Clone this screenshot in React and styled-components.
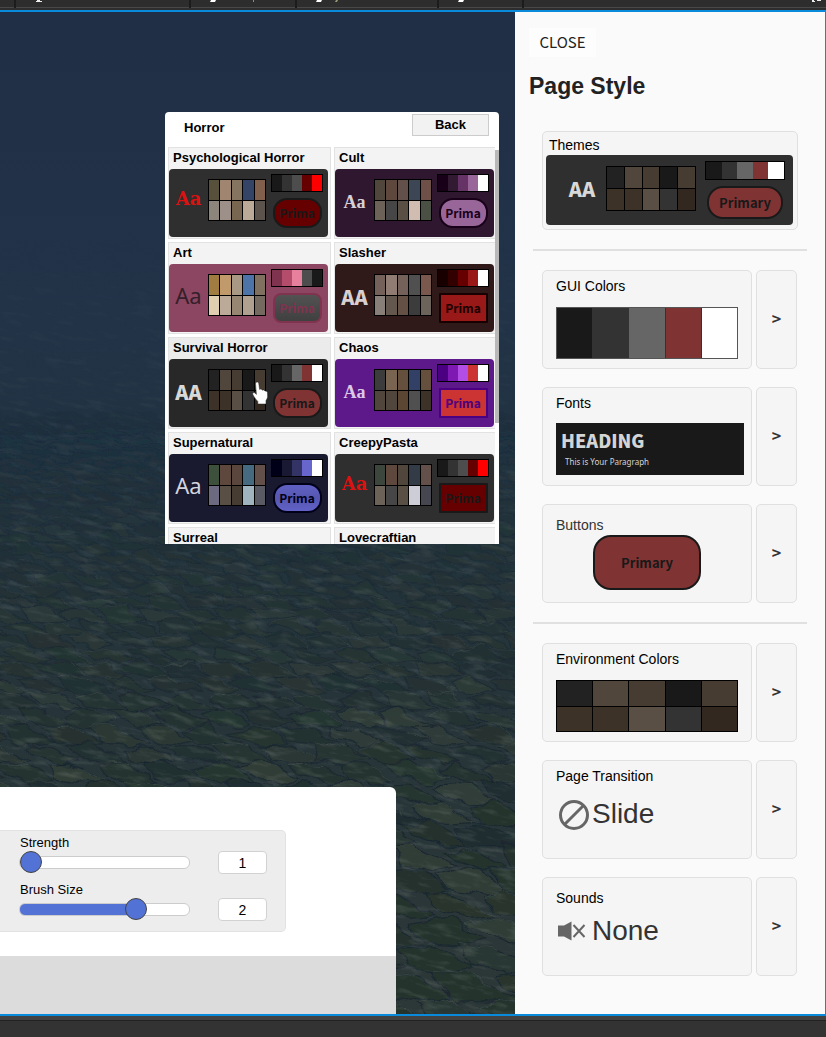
import { useState } from "react";
import styled, { createGlobalStyle } from "styled-components";

const survivalGui = ["#191919", "#333333", "#666666", "#803333", "#ffffff"];
const survivalEnv = [
  "#222222", "#50463c", "#463c32", "#191919", "#463c32",
  "#3c3228", "#3c3228", "#5a4f45", "#333333", "#32281f",
];

const themes = [
  {
    name: "Psychological Horror", bg: "#2f2f2f", font: "typewriter", ink: "#dd1111",
    gui: ["#191919", "#333333", "#4d4d4d", "#660000", "#ff0000"],
    env: ["#57503a", "#a08570", "#85745f", "#334466", "#80604c", "#8c857c", "#9c9088", "#786650", "#bcaa98", "#5c544c"],
    button: "#660000", edge: "#191919", radius: 14,
  },
  {
    name: "Cult", bg: "#2f182f", font: "gothic", ink: "#d8d0d8",
    gui: ["#190019", "#331a33", "#663366", "#996699", "#ffffff"],
    env: ["#50463c", "#5e473c", "#64504a", "#3c4654", "#6e5048", "#6c6258", "#464646", "#5a4f45", "#d0bcb0", "#4a5044"],
    button: "#996699", edge: "#190019", radius: 14,
  },
  {
    name: "Art", bg: "#8d4661", font: "plain", ink: "#33202a",
    gui: ["#80334f", "#b34d6b", "#e6809c", "#4d4d4d", "#191919"],
    env: ["#a07c40", "#c09a6a", "#a89884", "#4d74a8", "#807060", "#e0ceb0", "#bcaa98", "#968672", "#b0a090", "#746a60"],
    button: "linear-gradient(#525252, #404040)", edge: "#80334f", radius: 8,
  },
  {
    name: "Slasher", bg: "#2f1919", font: "creepy", ink: "#d8d0d0",
    gui: ["#190000", "#330000", "#660000", "#991919", "#ffffff"],
    env: ["#74625a", "#907c72", "#74625a", "#505050", "#7a584e", "#888078", "#64584e", "#645044", "#3c3c3c", "#6c645a"],
    button: "#991919", edge: "#190000", radius: 1,
  },
  {
    name: "Survival Horror", bg: "#282828", font: "creepy", ink: "#d8d8d8", hovered: true,
    gui: survivalGui, env: survivalEnv,
    button: "#803333", edge: "#191919", radius: 14,
  },
  {
    name: "Chaos", bg: "#5d1889", font: "gothic", ink: "#dcc8e8",
    gui: ["#4b0082", "#7f19b3", "#b24de6", "#cc3333", "#ffffff"],
    env: ["#3c3c3c", "#786450", "#64503c", "#334066", "#64503c", "#50463c", "#50463c", "#5a4632", "#505050", "#3c3228"],
    button: "#cc3333", edge: "#4b0082", radius: 1,
  },
  {
    name: "Supernatural", bg: "#19192f", font: "plain", ink: "#d4d4dc",
    gui: ["#000019", "#191933", "#333366", "#6666cc", "#ffffff"],
    env: ["#3c503c", "#5e473c", "#5a463c", "#466a80", "#64504a", "#6c6a80", "#5a4f45", "#463c32", "#a0b4c0", "#5a5a64"],
    button: "linear-gradient(#6060c4, #5656b0 50%, #6262c8)", edge: "#000019", radius: 14,
  },
  {
    name: "CreepyPasta", bg: "#2f2f2f", font: "typewriter", ink: "#dd1111",
    gui: ["#191919", "#333333", "#4d4d4d", "#660000", "#ff0000"],
    env: ["#3c463c", "#5e473c", "#50463c", "#333c46", "#64504a", "#6c6258", "#464646", "#5a4f45", "#cccdd6", "#464650"],
    button: "#660000", edge: "#191919", radius: 1,
  },
  { name: "Surreal" },
  { name: "Lovecraftian" },
];

// cobblestones, small and flat near the horizon, bigger towards the viewer
function makeStones() {
  let seed = 11;
  const rnd = () => {
    seed = (seed * 16807) % 2147483647;
    return seed / 2147483647;
  };
  const fills = ["#24332f", "#27362f", "#212f30", "#2b3833", "#26332e", "#323e38", "#22302f"];
  const stones = [];
  let y = 400;
  let row = 0;
  while (y < 1020) {
    const t = (y - 400) / 620;
    const h = 4 + t * 28;
    const w = 24 + t * 44;
    const jit = () => (rnd() - 0.5) * h * 0.5;
    for (let x = -80 + (row % 2) * w * 0.5 + rnd() * 12; x < 580; x += w) {
      const cw = w * (0.8 + rnd() * 0.15);
      const pts = [
        [x + jit(), y + h * 0.1 + jit()],
        [x + cw * 0.55, y + jit() * 0.5],
        [x + cw * 0.85, y + h * 0.2 + jit()],
        [x + cw + h * 0.9, y + h * 0.85 + jit() * 0.5],
        [x + cw * 0.6 + h * 0.7, y + h],
        [x + h * 0.6, y + h * 0.75 + jit()],
      ].map((p) => p.map((n) => n.toFixed(1)).join(","));
      const kind = rnd();
      stones.push({
        key: stones.length,
        points: pts.join(" "),
        edge: (kind > 0.8 ? pts.slice(2, 4) : pts.slice(0, 3)).join(" "),
        fill: fills[Math.floor(rnd() * fills.length)],
        light: kind > 0.55,
        opacity: Math.min(0.9, 0.04 + t * 1.4),
      });
    }
    y += h * 0.98;
    row += 1;
  }
  return stones;
}

const stones = makeStones();

function Ground() {
  return (
    <GroundSvg viewBox="0 0 515 1002" preserveAspectRatio="xMidYMax slice" aria-hidden="true">
      <defs>
        <linearGradient id="sea" x1="0" y1="0" x2="0" y2="1">
          <stop offset="0" stopColor="#202e46" />
          <stop offset="0.3" stopColor="#223348" />
          <stop offset="0.45" stopColor="#203240" />
          <stop offset="0.62" stopColor="#25343a" />
          <stop offset="1" stopColor="#2c3737" />
        </linearGradient>
        <linearGradient id="fade" x1="0" y1="0" x2="0" y2="1">
          <stop offset="0.22" stopColor="#000" />
          <stop offset="0.7" stopColor="#fff" />
        </linearGradient>
        <mask id="depth">
          <rect width="515" height="1002" fill="url(#fade)" />
        </mask>
        <filter id="rough" x="0" y="0" width="1" height="1">
          <feTurbulence type="fractalNoise" baseFrequency="0.04 0.06" numOctaves="2" seed="4" result="n" />
          <feDisplacementMap in="SourceGraphic" in2="n" scale="14" xChannelSelector="R" yChannelSelector="G" />
        </filter>
        <filter id="grain" x="-0.3" y="-0.3" width="1.6" height="1.6">
          <feTurbulence type="fractalNoise" baseFrequency="0.04 0.17" numOctaves="4" seed="9" />
          <feColorMatrix values="0 0 0 0 0.32  0 0 0 0 0.37  0 0 0 0 0.32  3 0 0 0 -1.5" />
        </filter>
      </defs>
      <rect width="515" height="1002" fill="url(#sea)" />
      <g filter="url(#rough)">
        {stones.map((s) => (
          <g key={s.key} opacity={s.opacity}>
            <polygon points={s.points} fill={s.fill} stroke="#1b2731" strokeWidth="1.2" />
            {s.light && (
              <polyline points={s.edge} fill="none" stroke="#5a6855" strokeWidth="1" opacity="0.5" />
            )}
          </g>
        ))}
      </g>
      <g mask="url(#depth)">
        <g transform="rotate(12 257 700)">
          <rect x="-100" y="150" width="715" height="970" filter="url(#grain)" opacity="0.2" />
        </g>
      </g>
    </GroundSvg>
  );
}

function Swatches({ colors, width, height, gap = 0, line = "#000", edge = "#000" }) {
  return (
    <SwatchGrid $width={width} $height={height} $gap={gap} $line={line} $edge={edge}>
      {colors.map((color, i) => (
        <Swatch key={i} $color={color} />
      ))}
    </SwatchGrid>
  );
}

function HandPointer() {
  return (
    <Hand viewBox="0 0 16 24" aria-hidden="true">
      <path
        d="M4 1.5C5 .6 6.6 1 6.8 2.6L7.6 8.4C8.6 7.8 9.9 8.1 10.3 9.2C11.3 8.6 12.6 9 13 10.1C14.2 9.7 15.4 10.5 15.5 11.8L15.6 15.5C15.6 17 14.6 18.6 14 19.6V23H5.8V20.4C4 18.6 1.8 15.6.8 13.4C.2 12 1.8 10.9 3 12L4.4 13.4L3.6 3.4C3.5 2.6 3.6 1.9 4 1.5Z"
        fill="#fff"
        stroke="#222"
        strokeWidth="0.5"
      />
    </Hand>
  );
}

function ThemeCard({ theme }) {
  return (
    <Card $hovered={theme.hovered}>
      <CardTitle>{theme.name}</CardTitle>
      {theme.bg && (
        <Preview $bg={theme.bg}>
          <Sample $font={theme.font} $ink={theme.ink}>
            {theme.font === "creepy" ? "AA" : "Aa"}
          </Sample>
          <Swatches colors={theme.env} width={58} height={42} gap={1} />
          <PreviewSide>
            <Swatches colors={theme.gui} width={52} height={18} />
            <PrimaryButton $bg={theme.button} $edge={theme.edge} $radius={theme.radius}>
              Prima
            </PrimaryButton>
          </PreviewSide>
          {theme.hovered && <HandPointer />}
        </Preview>
      )}
    </Card>
  );
}

function Setting({ title, low, muted, children }) {
  return (
    <SettingRow>
      <SettingCard $low={low}>
        <SettingTitle $muted={muted}>{title}</SettingTitle>
        {children}
      </SettingCard>
      <Arrow aria-label={title}>&gt;</Arrow>
    </SettingRow>
  );
}

function Control({ id, label, min, max, start }) {
  const [value, setValue] = useState(start);
  const fill = ((value - min) / (max - min)) * 100;
  return (
    <div>
      <ControlLabel htmlFor={id}>{label}</ControlLabel>
      <ControlRow>
        <Slider
          id={id}
          type="range"
          min={min}
          max={max}
          step="any"
          value={value}
          onChange={(e) => setValue(Number(e.target.value))}
          style={{ "--fill": `${fill}%` }}
        />
        <NumberBox aria-label={`${label} value`} value={Math.round(value)} readOnly />
      </ControlRow>
    </div>
  );
}

export default function App() {
  return (
    <Page>
      <GlobalStyle />
      <TabStrip aria-hidden="true">
        <Tab $width={16} />
        <Tab $width={175}>
          <svg width="44" height="8"><path d="M21 0h3v1h2v1h-6v-1h1z" fill="#eee" /></svg>
        </Tab>
        <Tab $width={106}>
          <svg width="80" height="8">
            <path d="M20 0h5l-1 2h-5z" fill="#fff" />
            <path d="M62 0h1v2h-1z" fill="#b77" />
          </svg>
        </Tab>
        <Tab $width={142}>
          <svg width="80" height="8">
            <path d="M20 0h5l-1 2h-5z" fill="#fff" />
            <path d="M39 0h2l-1 2h-2z" fill="#997" />
          </svg>
        </Tab>
        <Tab $width={85}>
          <svg width="80" height="8"><path d="M20 0h5l-1 2h-5z" fill="#fff" /></svg>
        </Tab>
        <TabEnd>
          <svg width="14" height="8"><path d="M0 0h2v1h1v1H0zM5 0h4v1H5z" fill="#eee" /></svg>
        </TabEnd>
      </TabStrip>

      <Main>
        <Scene>
          <Ground />
          <Popup>
            <PopupHeader>
              <PopupTitle>Horror</PopupTitle>
              <BackButton>Back</BackButton>
            </PopupHeader>
            <PopupBody>
              <ThemeList>
                {themes.map((theme) => (
                  <ThemeCard key={theme.name} theme={theme} />
                ))}
              </ThemeList>
              <ScrollTrack>
                <ScrollThumb />
              </ScrollTrack>
            </PopupBody>
          </Popup>

          <ToolPanel>
            <ToolGroup>
              <Control id="strength" label="Strength" min={1} max={10} start={1} />
              <Control id="brush" label="Brush Size" min={0} max={2.8} start={2} />
            </ToolGroup>
            <ToolFooter />
          </ToolPanel>
        </Scene>

        <Sidebar>
          <SidebarHeader>
            <CloseButton>CLOSE</CloseButton>
            <h1>Page Style</h1>
          </SidebarHeader>
          <Section>
            <ThemesCard>
              <ThemesTitle>Themes</ThemesTitle>
              <LargePreview>
                <Sample $font="creepy" $ink="#d8d8d8" $large>AA</Sample>
                <Swatches colors={survivalEnv} width={90} height={45} gap={1} />
                <PreviewSide $large>
                  <Swatches colors={survivalGui} width={80} height={19} />
                  <PrimaryButton $bg="#803333" $edge="#191919" $radius={16} $size="medium">
                    Primary
                  </PrimaryButton>
                </PreviewSide>
              </LargePreview>
            </ThemesCard>
          </Section>
          <Divider />
          <Section>
            <Setting title="GUI Colors">
              <Swatches colors={survivalGui} height={52} gap={1} line="#333" edge="#555" />
            </Setting>
            <Setting title="Fonts">
              <FontBox>
                <FontHeading>HEADING</FontHeading>
                <FontText>This is Your Paragraph</FontText>
              </FontBox>
            </Setting>
            <Setting title="Buttons" low muted>
              <PrimaryButton $bg="#803333" $edge="#191919" $radius={18} $size="large">
                Primary
              </PrimaryButton>
            </Setting>
          </Section>
          <Divider />
          <Section>
            <Setting title="Environment Colors">
              <Swatches colors={survivalEnv} height={52} gap={1} />
            </Setting>
            <Setting title="Page Transition">
              <Choice>
                <svg width="36" height="36" viewBox="0 0 36 36" aria-hidden="true">
                  <circle cx="18" cy="19" r="13.5" fill="none" stroke="#666" strokeWidth="3" />
                  <path d="M8.5 28.5L27.5 9.5" stroke="#666" strokeWidth="3" />
                </svg>
                Slide
              </Choice>
            </Setting>
            <Setting title="Sounds" low>
              <Choice $tight>
                <svg width="36" height="36" viewBox="0 0 36 36" aria-hidden="true">
                  <path d="M2 12.5h6L15.5 8.5v19L8 23.5H2z" fill="#666" />
                  <path d="M17.5 12l11 12M28.5 12l-11 12" stroke="#666" strokeWidth="2" />
                </svg>
                None
              </Choice>
            </Setting>
          </Section>
        </Sidebar>
      </Main>
      <StatusBar />
    </Page>
  );
}

const GlobalStyle = createGlobalStyle`
  * {
    box-sizing: border-box;
  }
  body {
    margin: 0;
    background: #333;
    font-family: "Liberation Sans", Arial, sans-serif;
    color: #000;
  }
  h1, h2, h3, p {
    margin: 0;
  }
  button, input {
    font-family: inherit;
    padding: 0;
    margin: 0;
  }
`;

const Page = styled.div`
  min-height: 100vh;
  display: flex;
  flex-direction: column;
`;

const TabStrip = styled.div`
  height: 10px;
  display: flex;
  background: linear-gradient(#2d2d2d 7px, #484848 7px, #484848 8px, #2d2d2d 8px);
`;
const Tab = styled.div`
  width: ${(p) => p.$width}px;
  height: 8px;
  overflow: hidden;
  border-right: 2px solid #1c1c1c;
  svg {
    display: block;
  }
`;
const TabEnd = styled.div`
  flex: 1;
  display: flex;
  justify-content: flex-end;
`;

const Main = styled.main`
  flex: 1;
  display: flex;
  border: solid #0a8adb;
  border-width: 2px 1px 2px 0;
`;

const Scene = styled.section`
  flex: 1;
  min-width: 0;
  position: relative;
  display: flex;
  flex-direction: column;
  overflow: hidden;
`;
const GroundSvg = styled.svg`
  position: absolute;
  inset: 0;
  width: 100%;
  height: 100%;
`;

const Popup = styled.div`
  position: relative;
  align-self: flex-end;
  width: 334px;
  margin: 100px 16px 40px 0;
  background: #fff;
  border-radius: 4px 4px 0 0;
`;
const PopupHeader = styled.div`
  display: flex;
  justify-content: space-between;
  align-items: flex-start;
  height: 35px;
  padding: 2px 10px 0 19px;
`;
const PopupTitle = styled.h2`
  font-size: 13px;
  line-height: 28px;
`;
const BackButton = styled.button`
  width: 77px;
  height: 22px;
  border: 1px solid #ccc;
  background: #f2f2f2;
  font-size: 13px;
  line-height: 18px;
  font-weight: bold;
  color: #000;
`;
const PopupBody = styled.div`
  display: flex;
  height: 397px;
`;
const ThemeList = styled.div`
  flex: 1;
  min-width: 0;
  overflow: hidden;
  padding-left: 3px;
  display: grid;
  grid-template-columns: 163px 163px;
  grid-auto-rows: 92px;
  gap: 3px;
`;
const ScrollTrack = styled.div`
  width: 4px;
  padding-top: 3px;
`;
const ScrollThumb = styled.div`
  height: 273px;
  background: #b8b8b8;
`;

const Card = styled.article`
  border: 1px solid #e2e2e2;
  background: ${(p) => (p.$hovered ? "#ebebeb" : "#f3f3f3")};
`;
const CardTitle = styled.h3`
  padding: 0 0 2px 4px;
  font-size: 13px;
  line-height: 19px;
  white-space: nowrap;
`;
const Preview = styled.div`
  position: relative;
  display: flex;
  align-items: flex-start;
  width: 159px;
  height: 68px;
  padding-top: 10px;
  border-radius: 4px;
  background: ${(p) => p.$bg};
`;
const LargePreview = styled.div`
  display: flex;
  align-items: flex-start;
  height: 70px;
  padding-top: 11px;
  border-radius: 4px;
  background: #2f2f2f;
`;
const sampleFonts = {
  typewriter: `font: bold 18px/40px "DejaVu Serif", serif;`,
  gothic: `font: bold 18px/46px "Liberation Serif", serif;`,
  plain: `font: 22px/42px "Noto Sans", sans-serif;`,
  creepy: `font: 900 20px/46px "Noto Sans CJK SC", sans-serif;`,
};
const Sample = styled.span`
  width: ${(p) => (p.$large ? 60 : 39)}px;
  padding-left: ${(p) => (p.$large ? 12 : 0)}px;
  text-align: center;
  color: ${(p) => p.$ink};
  ${(p) => sampleFonts[p.$font]}
`;
const PreviewSide = styled.div`
  display: flex;
  flex-direction: column;
  align-items: center;
  gap: 6px;
  margin-top: -5px;
  margin-left: ${(p) => (p.$large ? 9 : 5)}px;
`;

const SwatchGrid = styled.div`
  display: grid;
  grid-template-columns: repeat(5, 1fr);
  grid-auto-rows: 1fr;
  gap: ${(p) => p.$gap}px;
  width: ${(p) => (p.$width ? `${p.$width}px` : "100%")};
  height: ${(p) => p.$height}px;
  border: 1px solid ${(p) => p.$edge};
  background: ${(p) => p.$line};
`;
const Swatch = styled.span`
  background: ${(p) => p.$color};
`;

const buttonSizes = {
  small: "width: 49px; height: 30px; font-size: 12px;",
  medium: "width: 76px; height: 33px; font-size: 13px;",
  large: "width: 108px; height: 55px; font-size: 13px;",
};
const PrimaryButton = styled.button`
  ${(p) => buttonSizes[p.$size || "small"]}
  display: block;
  margin: 0 auto;
  border: 2px solid ${(p) => p.$edge};
  border-radius: ${(p) => p.$radius}px;
  background: ${(p) => p.$bg};
  color: ${(p) => p.$edge};
  font-family: "Noto Sans CJK SC", sans-serif;
  font-weight: bold;
  line-height: 20px;
`;
const Hand = styled.svg`
  position: absolute;
  left: 83px;
  top: 22px;
  width: 16px;
  height: 24px;
`;

const ToolPanel = styled.div`
  position: relative;
  width: 396px;
  margin-top: auto;
  padding-top: 43px;
  background: #fff;
  border-radius: 0 6px 0 0;
`;
const ToolGroup = styled.div`
  display: flex;
  flex-direction: column;
  gap: 8px;
  width: 286px;
  padding: 4px 18px 10px 19px;
  border: 1px solid #e2e2e2;
  border-left: none;
  border-radius: 0 5px 5px 0;
  background: #ededed;
`;
const ControlLabel = styled.label`
  display: block;
  font-size: 13px;
  line-height: 16px;
  padding-left: 1px;
`;
const ControlRow = styled.div`
  display: flex;
  align-items: center;
  justify-content: space-between;
`;
const Slider = styled.input`
  appearance: none;
  width: 171px;
  height: 22px;
  background: transparent;
  &::-webkit-slider-runnable-track {
    height: 13px;
    border: 1px solid #ccc;
    border-radius: 6px;
    background: linear-gradient(#5272d6, #5272d6) 0 0 / var(--fill) 100% no-repeat #fff;
  }
  &::-webkit-slider-thumb {
    appearance: none;
    width: 22px;
    height: 22px;
    margin-top: -6px;
    border: 1px solid #444;
    border-radius: 50%;
    background: #5272d6;
  }
`;
const NumberBox = styled.input`
  width: 49px;
  height: 23px;
  border: 1px solid #d2d2d2;
  border-radius: 4px;
  background: #fff;
  font-size: 14px;
  text-align: center;
`;
const ToolFooter = styled.div`
  height: 58px;
  margin-top: 24px;
  background: #dcdcdc;
`;

const Sidebar = styled.aside`
  width: 310px;
  padding: 16px 0 38px;
  background: #fafafa;
`;
const SidebarHeader = styled.header`
  padding-left: 14px;
  h1 {
    margin: 14px 0 30px;
    font-size: 23px;
    line-height: 30px;
    color: #222;
  }
`;
const CloseButton = styled.button`
  display: block;
  width: 67px;
  height: 29px;
  padding-bottom: 2px;
  border: none;
  background: #fdfdfd;
  font-family: "Noto Sans CJK SC", sans-serif;
  font-size: 15px;
  line-height: 24px;
  color: #222;
`;
const Section = styled.section`
  display: flex;
  flex-direction: column;
  gap: 18px;
  margin: 0 27px;
`;
const Divider = styled.hr`
  height: 2px;
  margin: 19px 18px;
  border: none;
  background: #e0e0e0;
`;
const ThemesCard = styled.div`
  height: 99px;
  padding: 4px 4px 4px 3px;
  border: 1px solid #e0e0e0;
  border-radius: 5px;
  background: #f5f5f5;
`;
const ThemesTitle = styled.h2`
  padding: 0 0 1px 3px;
  font-size: 14px;
  font-weight: normal;
  line-height: 18px;
`;
const SettingRow = styled.div`
  display: flex;
  gap: 4px;
  height: 99px;
  padding-right: 1px;
`;
const SettingCard = styled.div`
  flex: 1;
  min-width: 0;
  padding: ${(p) => (p.$low ? 11 : 6)}px 13px 0;
  border: 1px solid #e0e0e0;
  border-radius: 5px;
  background: #f5f5f5;
  ${SwatchGrid} {
    margin-top: 12px;
  }
  ${PrimaryButton} {
    margin-top: 1px;
  }
`;
const SettingTitle = styled.h2`
  font-size: 14px;
  font-weight: normal;
  line-height: 18px;
  color: ${(p) => (p.$muted ? "#333" : "#000")};
`;
const Arrow = styled.button`
  width: 41px;
  padding-bottom: 4px;
  border: 1px solid #e0e0e0;
  border-radius: 5px;
  background: #f5f5f5;
  font-family: "Noto Sans CJK SC", sans-serif;
  font-size: 16px;
  font-weight: bold;
  color: #333;
`;
const FontBox = styled.div`
  height: 52px;
  margin: 11px -6px 0 0;
  padding: 3px 5px;
  background: #191919;
  color: #d4d4d4;
`;
const FontHeading = styled.p`
  font: 900 18px/28px "Noto Sans CJK SC", sans-serif;
`;
const FontText = styled.p`
  padding-left: 4px;
  font: 8px/16px "Noto Sans", sans-serif;
`;
const Choice = styled.p`
  display: flex;
  align-items: center;
  height: 36px;
  margin-top: ${(p) => (p.$tight ? 6 : 11)}px;
  font-size: 28px;
  color: #333;
`;

const StatusBar = styled.footer`
  height: 21px;
  background: linear-gradient(#424242 4px, #222 4px, #222 5px, #333 5px);
`;
